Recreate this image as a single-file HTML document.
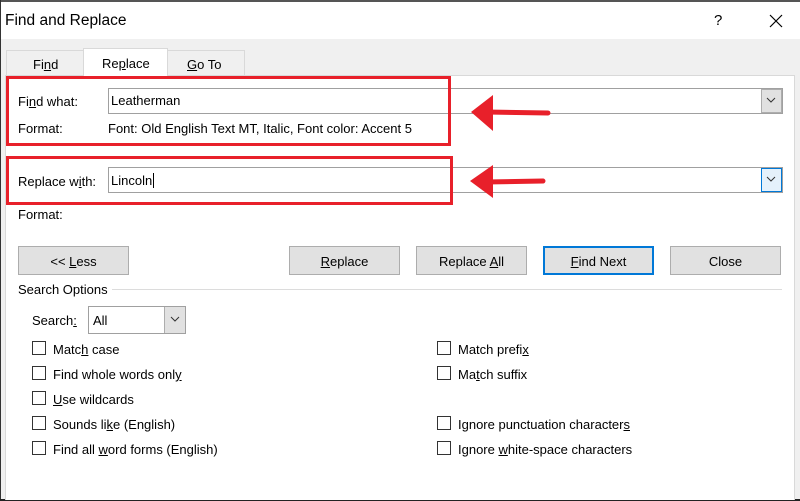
<!DOCTYPE html>
<html><head><meta charset="utf-8"><style>
*{margin:0;padding:0;box-sizing:border-box}
body{width:800px;height:501px;overflow:hidden;background:#f0f0f0;position:relative;font-family:"Liberation Sans",sans-serif;font-size:13px;color:#000}
.a{position:absolute}
.u{text-decoration:underline}
.btn{position:absolute;height:29px;width:111px;background:#e1e1e1;border:1px solid #adadad;text-align:center;line-height:29px}
.cb{position:absolute;width:14px;height:14px;border:1px solid #333;background:#fff}
.lbl{position:absolute;line-height:16px}
.rb{position:absolute;border:3px solid #e8202a}
</style></head><body>
<div class="a" style="left:0;top:0;width:800px;height:2px;background:#555"></div>
<div class="a" style="left:0;top:0;width:1px;height:501px;background:#333"></div>
<div class="a" style="left:0;top:499px;width:800px;height:2px;background:#222"></div>
<div class="a" style="left:1px;top:2px;width:799px;height:37px;background:#fff"></div>
<div class="a" style="left:5px;top:12px;font-size:15.5px">Find and Replace</div>
<div class="a" style="left:714px;top:12px;font-size:15px">?</div>
<svg class="a" style="left:769px;top:14px" width="14" height="14"><path d="M1 1L13 13M13 1L1 13" stroke="#000" stroke-width="1.2"/></svg>
<!-- tabs -->
<div class="a" style="left:6px;top:50px;width:78px;height:26px;border:1px solid #d9d9d9;border-bottom:none;background:#f0f0f0"></div>
<div class="a" style="left:167px;top:50px;width:78px;height:26px;border:1px solid #d9d9d9;border-bottom:none;background:#f0f0f0"></div>
<div class="a" style="left:5px;top:75px;width:790px;height:425px;background:#fff;border:1px solid #d9d9d9;border-bottom:none"></div>
<div class="a" style="left:83px;top:48px;width:85px;height:29px;background:#fff;border:1px solid #d9d9d9;border-bottom:none"></div>
<div class="a" style="left:33px;top:57px">Fi<span class="u">n</span>d</div>
<div class="a" style="left:102px;top:56px">Re<span class="u">p</span>lace</div>
<div class="a" style="left:187px;top:57px"><span class="u">G</span>o To</div>
<!-- find -->
<div class="a" style="left:18px;top:94px">Fi<span class="u">n</span>d what:</div>
<div class="a" style="left:108px;top:88px;width:675px;height:26px;border:1px solid #a0a0a0;background:#fff"></div>
<div class="a" style="left:111px;top:93px">Leatherman</div>
<div class="a" style="left:761px;top:89px;width:21px;height:24px;background:#e1e1e1;border:1px solid #adadad"></div>
<svg class="a" style="left:766px;top:97px" width="10" height="6"><path d="M1 1L5 5L9 1" stroke="#333" fill="none"/></svg>
<div class="a" style="left:18px;top:121px">Format:</div>
<div class="a" style="left:108px;top:121px">Font: Old English Text MT, Italic, Font color: Accent 5</div>
<!-- replace -->
<div class="a" style="left:18px;top:174px">Replace w<span class="u">i</span>th:</div>
<div class="a" style="left:108px;top:167px;width:675px;height:26px;border:1px solid #a0a0a0;background:#fff"></div>
<div class="a" style="left:111px;top:173px">Lincoln<span style="border-left:1px solid #000;margin-left:1px"></span></div>
<div class="a" style="left:761px;top:168px;width:21px;height:24px;background:#e5f1fb;border:1px solid #0078d7"></div>
<svg class="a" style="left:766px;top:176px" width="10" height="6"><path d="M1 1L5 5L9 1" stroke="#333" fill="none"/></svg>
<div class="a" style="left:18px;top:207px">Format:</div>
<div class="rb" style="left:6px;top:76px;width:445px;height:70px"></div>
<div class="rb" style="left:6px;top:156px;width:447px;height:49px"></div>
<svg class="a" style="left:460px;top:90px" width="100" height="110">
<path d="M26 22L88 23" stroke="#e8202a" stroke-width="5" stroke-linecap="round"/>
<polygon points="11,22 33,5 33,41" fill="#e8202a"/>
<path d="M26 92L83 91" stroke="#e8202a" stroke-width="5" stroke-linecap="round"/>
<polygon points="10,91 33,75 33,108" fill="#e8202a"/>
</svg>
<!-- buttons -->
<div class="btn" style="left:18px;top:246px">&lt;&lt; <span class="u">L</span>ess</div>
<div class="btn" style="left:289px;top:246px"><span class="u">R</span>eplace</div>
<div class="btn" style="left:416px;top:246px">Replace <span class="u">A</span>ll</div>
<div class="btn" style="left:543px;top:246px;border:2px solid #0078d7;line-height:27px"><span class="u">F</span>ind Next</div>
<div class="btn" style="left:670px;top:246px">Close</div>
<div class="a" style="left:18px;top:282px">Search Options</div>
<div class="a" style="left:112px;top:289px;width:670px;height:1px;background:#dcdcdc"></div>
<div class="a" style="left:32px;top:313px">Search<span class="u">:</span></div>
<div class="a" style="left:88px;top:306px;width:98px;height:28px;border:1px solid #a0a0a0;background:#fff"></div>
<div class="a" style="left:93px;top:313px">All</div>
<div class="a" style="left:164px;top:307px;width:21px;height:26px;background:#e1e1e1;border-left:1px solid #adadad"></div>
<svg class="a" style="left:170px;top:316px" width="10" height="6"><path d="M1 1L5 5L9 1" stroke="#333" fill="none"/></svg>
<div class="cb" style="left:32px;top:341px"></div><div class="lbl" style="left:53px;top:342px">Matc<span class="u">h</span> case</div>
<div class="cb" style="left:32px;top:366px"></div><div class="lbl" style="left:53px;top:367px">Find whole words onl<span class="u">y</span></div>
<div class="cb" style="left:32px;top:391px"></div><div class="lbl" style="left:53px;top:392px"><span class="u">U</span>se wildcards</div>
<div class="cb" style="left:32px;top:416px"></div><div class="lbl" style="left:53px;top:417px">Sounds li<span class="u">k</span>e (English)</div>
<div class="cb" style="left:32px;top:441px"></div><div class="lbl" style="left:53px;top:442px">Find all <span class="u">w</span>ord forms (English)</div>
<div class="cb" style="left:437px;top:341px"></div><div class="lbl" style="left:458px;top:342px">Match prefi<span class="u">x</span></div>
<div class="cb" style="left:437px;top:366px"></div><div class="lbl" style="left:458px;top:367px">Ma<span class="u">t</span>ch suffix</div>
<div class="cb" style="left:437px;top:416px"></div><div class="lbl" style="left:458px;top:417px">Ignore punctuation character<span class="u">s</span></div>
<div class="cb" style="left:437px;top:441px"></div><div class="lbl" style="left:458px;top:442px">Ignore <span class="u">w</span>hite-space characters</div>
</body></html>
